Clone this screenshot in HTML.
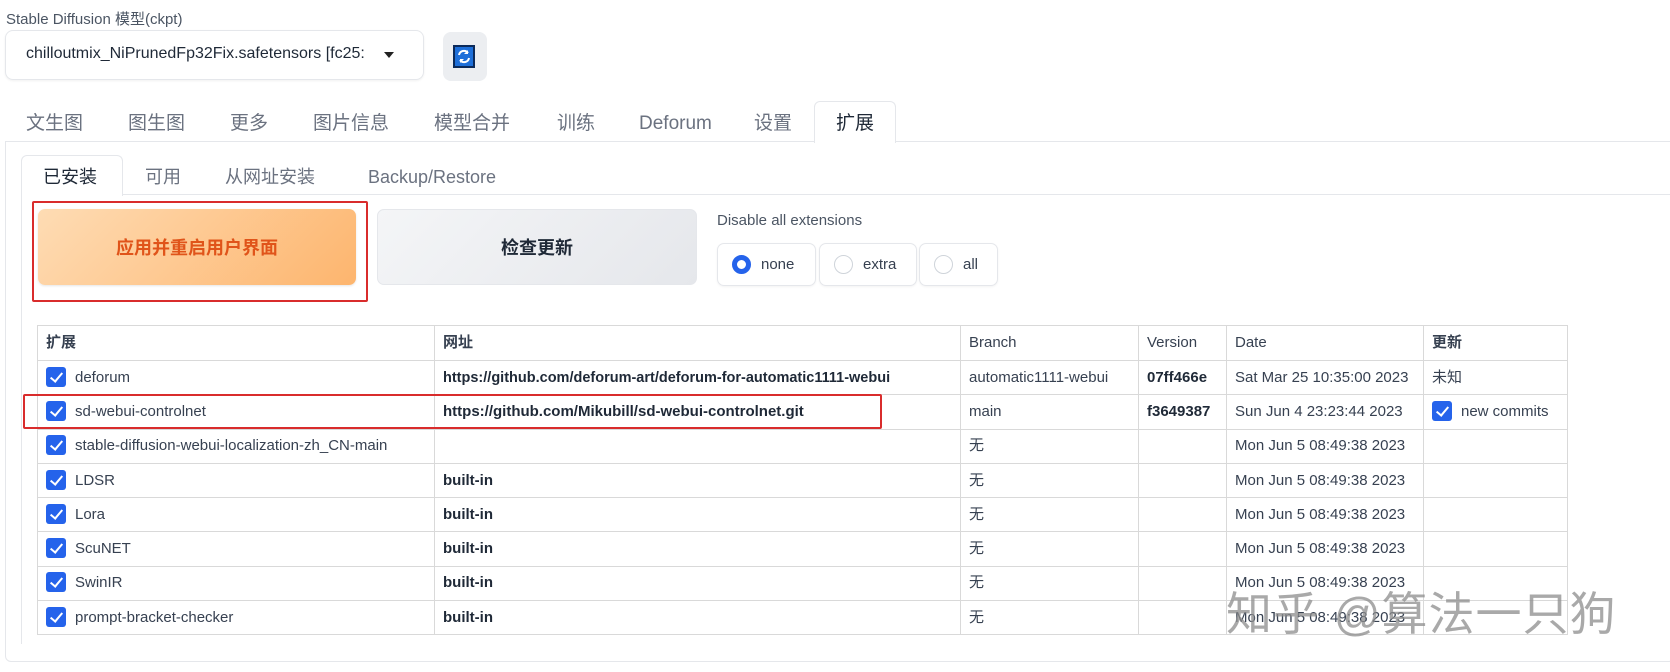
<!DOCTYPE html>
<html><head><meta charset="utf-8"><style>
*{box-sizing:border-box;margin:0;padding:0}
body{width:1670px;height:672px;background:#fff;font-family:"Liberation Sans","Noto Sans CJK SC",sans-serif;color:#374151;position:relative;overflow:hidden}
.a{position:absolute}
.tab{position:absolute;top:112px;font-size:19px;line-height:24px;height:24px;color:#6b7280}
.st{position:absolute;top:165px;font-size:18px;line-height:24px;height:24px;color:#6b7280}
table{position:absolute;left:37px;top:325px;border-collapse:collapse;font-size:15px;line-height:20px;color:#374151}
td,th{border:1px solid #d9d9d9;padding:0 8px;text-align:left;white-space:nowrap;height:34.3px;vertical-align:middle}
th{font-weight:bold;height:35px}
td b{font-weight:bold;color:#1f2937}
.cb{display:inline-block;width:20px;height:20px;background:#2563eb;border-radius:3px;vertical-align:middle;margin-right:9px;position:relative;top:-1px}
.cb:after{content:"";position:absolute;left:7px;top:3px;width:5px;height:10px;border:solid #fff;border-width:0 2.5px 2.5px 0;transform:rotate(40deg)}
.radio{position:absolute;top:243px;height:43px;border:1px solid #e5e7eb;border-radius:7px;font-size:15px;display:flex;align-items:center;padding-left:14px;box-shadow:0 1px 2px rgba(0,0,0,.05)}
.rc{width:19px;height:19px;border-radius:50%;border:1px solid #cfd4da;margin-right:10px;background:#fff}
</style></head><body>
<div class="a" style="left:6px;top:8px;font-size:15px;color:#4b5563">Stable Diffusion 模型(ckpt)</div>
<div class="a" style="left:5px;top:30px;width:419px;height:50px;border:1px solid #e5e7eb;border-radius:8px;box-shadow:0 1px 2px rgba(0,0,0,.06)"></div>
<div class="a" style="left:26px;top:45px;font-size:16px;color:#1f2937">chilloutmix_NiPrunedFp32Fix.safetensors [fc25:</div>
<div class="a" style="left:384px;top:52px;width:0;height:0;border-left:5px solid transparent;border-right:5px solid transparent;border-top:6px solid #222"></div>
<div class="a" style="left:443px;top:32px;width:44px;height:49px;background:#eceef1;border-radius:8px"></div>
<div class="a" style="left:453px;top:45px;width:22px;height:23px;background:#1e6fd9;border:2px solid #0b2a5a"><svg width="18" height="19" viewBox="0 0 18 19"><path d="M4 8a5 5 0 0 1 9-2M14 11a5 5 0 0 1-9 2" stroke="#fff" stroke-width="2" fill="none"/><path d="M13 3v4h-4z M5 16v-4h4z" fill="#fff"/></svg></div>

<div class="tab" style="left:26px">文生图</div>
<div class="tab" style="left:128px">图生图</div>
<div class="tab" style="left:230px">更多</div>
<div class="tab" style="left:313px">图片信息</div>
<div class="tab" style="left:434px">模型合并</div>
<div class="tab" style="left:557px">训练</div>
<div class="tab" style="left:639px">Deforum</div>
<div class="tab" style="left:754px">设置</div>
<div class="a" style="left:5px;top:141px;width:1670px;height:521px;border:1px solid #e5e7eb;border-radius:0 0 6px 6px"></div>
<div class="a" style="left:814px;top:101px;width:82px;height:42px;border:1px solid #e5e7eb;border-bottom:none;border-radius:6px 6px 0 0;background:#fff"></div>
<div class="tab" style="left:836px;color:#1f2937">扩展</div>

<div class="a" style="left:21px;top:194px;width:1660px;height:450px;border-top:1px solid #e5e7eb;border-left:1px solid #e5e7eb"></div>
<div class="a" style="left:21px;top:155px;width:102px;height:41px;border:1px solid #e5e7eb;border-bottom:none;border-radius:6px 6px 0 0;background:#fff"></div>
<div class="st" style="left:43px;color:#1f2937">已安装</div>
<div class="st" style="left:145px">可用</div>
<div class="st" style="left:225px">从网址安装</div>
<div class="st" style="left:368px">Backup/Restore</div>

<div class="a" style="left:32px;top:201px;width:336px;height:101px;border:2px solid #d92c2c;border-radius:2px"></div>
<div class="a" style="left:38px;top:209px;width:318px;height:76px;border-radius:7px;background:linear-gradient(135deg,#fedcb4,#fdb56e);box-shadow:0 1px 2px rgba(0,0,0,.1);color:#e0541a;font-weight:bold;font-size:18px;display:flex;align-items:center;justify-content:center">应用并重启用户界面</div>
<div class="a" style="left:377px;top:209px;width:320px;height:76px;border-radius:7px;background:linear-gradient(135deg,#f4f5f7,#e5e7eb);border:1px solid #e5e7eb;color:#1f2937;font-weight:bold;font-size:18px;display:flex;align-items:center;justify-content:center">检查更新</div>
<div class="a" style="left:717px;top:212px;font-size:15px;color:#4b5563">Disable all extensions</div>
<div class="radio" style="left:717px;width:99px"><span class="rc" style="border:5px solid #2563eb"></span>none</div>
<div class="radio" style="left:819px;width:98px"><span class="rc"></span>extra</div>
<div class="radio" style="left:919px;width:79px"><span class="rc"></span>all</div>

<table>
<colgroup><col style="width:397px"><col style="width:526px"><col style="width:178px"><col style="width:88px"><col style="width:197px"><col style="width:144px"></colgroup>
<tr><th>扩展</th><th>网址</th><th style="font-weight:normal">Branch</th><th style="font-weight:normal">Version</th><th style="font-weight:normal">Date</th><th>更新</th></tr>
<tr><td><span class="cb"></span>deforum</td><td><b style="font-size:14.5px">https://github.com/deforum-art/deforum-for-automatic1111-webui</b></td><td>automatic1111-webui</td><td><b>07ff466e</b></td><td>Sat Mar 25 10:35:00 2023</td><td>未知</td></tr>
<tr><td><span class="cb"></span>sd-webui-controlnet</td><td><b>https://github.com/Mikubill/sd-webui-controlnet.git</b></td><td>main</td><td><b>f3649387</b></td><td>Sun Jun 4 23:23:44 2023</td><td><span class="cb"></span>new commits</td></tr>
<tr><td><span class="cb"></span>stable-diffusion-webui-localization-zh_CN-main</td><td></td><td>无</td><td></td><td>Mon Jun 5 08:49:38 2023</td><td></td></tr>
<tr><td><span class="cb"></span>LDSR</td><td><b>built-in</b></td><td>无</td><td></td><td>Mon Jun 5 08:49:38 2023</td><td></td></tr>
<tr><td><span class="cb"></span>Lora</td><td><b>built-in</b></td><td>无</td><td></td><td>Mon Jun 5 08:49:38 2023</td><td></td></tr>
<tr><td><span class="cb"></span>ScuNET</td><td><b>built-in</b></td><td>无</td><td></td><td>Mon Jun 5 08:49:38 2023</td><td></td></tr>
<tr><td><span class="cb"></span>SwinIR</td><td><b>built-in</b></td><td>无</td><td></td><td>Mon Jun 5 08:49:38 2023</td><td></td></tr>
<tr><td><span class="cb"></span>prompt-bracket-checker</td><td><b>built-in</b></td><td>无</td><td></td><td>Mon Jun 5 08:49:38 2023</td><td></td></tr>
</table>
<div class="a" style="left:23px;top:394px;width:859px;height:35px;border:2px solid #d92c2c;border-radius:2px"></div>
<div class="a" style="left:1226px;top:578px;font-size:46px;color:rgba(140,140,140,.75);letter-spacing:1px;white-space:nowrap">知乎 @算法一只狗</div>
</body></html>
